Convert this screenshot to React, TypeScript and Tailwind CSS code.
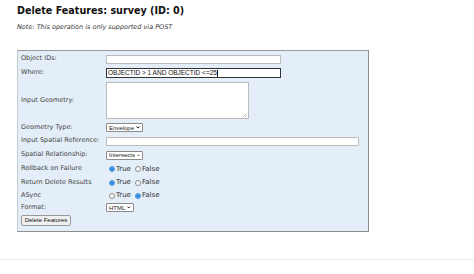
import React from 'react';

const vfont = { fontFamily: '"DejaVu Sans", Verdana, sans-serif' };
const afont = { fontFamily: '"Liberation Sans", Arial, sans-serif' };

function Chevron() {
  return (
    <svg width="6" height="5" viewBox="0 0 6 5" className="ml-[2px]">
      <path d="M0.8 1 L3 3.4 L5.2 1" fill="none" stroke="#111" strokeWidth="1.4" />
    </svg>
  );
}

function Select({ value, width }: { value: string; width: string }) {
  return (
    <div
      className={`flex h-[9px] items-center justify-between rounded-[1px] border border-[#8a8a8a] bg-white px-[2px] text-[6px] leading-none text-[#222] ${width}`}
      style={afont}
    >
      <span>{value}</span>
      <Chevron />
    </div>
  );
}

function Radio({ checked, label }: { checked: boolean; label: string }) {
  return (
    <span className="flex items-center gap-[1px] text-[7px] text-[#333]">
      <span
        className={`flex h-[6px] w-[6px] items-center justify-center rounded-full border ${checked ? 'border-[#3b8ee0] bg-white' : 'border-[#8a8a8a] bg-white'}`}
      >
        {checked && <span className="h-[4px] w-[4px] rounded-full bg-[#2f86df]" />}
      </span>
      <span>{label}</span>
    </span>
  );
}

function Row({ label, h, children }: { label: string; h: string; children: React.ReactNode }) {
  return (
    <div className={`flex items-center ${h}`}>
      <div className="w-[85px] shrink-0 text-[6.5px] text-[#444]">{label}</div>
      <div className="flex items-center">{children}</div>
    </div>
  );
}

export default function App() {
  return (
    <div className="relative h-[274px] w-[474px] overflow-hidden bg-white" style={vfont}>
      <div className="px-[17px] pt-[5px]">
        <h2 className="text-[9.6px] font-bold leading-[12px] text-[#111]">Delete Features: survey (ID: 0)</h2>
        <p className="mt-[6px] text-[6.5px] italic leading-[8px] text-[#333]">Note: This operation is only supported via POST</p>

        <div className="mt-[19px] h-[182px] w-[352px] border border-t-[#9a9a9a] border-r-[#8c8c8c] border-b-[#8c8c8c] border-l-[#c4ccd4] bg-[#e3eef8] pl-[3px] pt-[1px]">
          <Row label="Object IDs:" h="h-[14px]">
            <div className="h-[9px] w-[175px] border border-[#bbb] bg-white" />
          </Row>
          <Row label="Where:" h="h-[14px]">
            <div
              className="flex h-[10px] w-[175px] items-center border border-[#333] bg-white px-[1px] text-[6.5px] leading-none text-[#111]"
              style={afont}
            >
              OBJECTID &gt; 1 AND OBJECTID &lt;=25
              <span className="ml-[0.5px] h-[7px] w-[1px] bg-[#111]" />
            </div>
          </Row>
          <Row label="Input Geometry:" h="h-[41px]">
            <div className="relative h-[37px] w-[143px] border border-[#bbb] bg-white">
              <svg width="4" height="4" viewBox="0 0 4 4" className="absolute right-[1px] bottom-[1px]">
                <path d="M0 4 L4 0 M2 4 L4 2" stroke="#aaa" strokeWidth="0.6" />
              </svg>
            </div>
          </Row>
          <Row label="Geometry Type:" h="h-[13px]">
            <Select value="Envelope" width="w-[37px]" />
          </Row>
          <Row label="Input Spatial Reference:" h="h-[14px]">
            <div className="h-[9px] w-[253px] rounded-[1px] border border-[#bbb] bg-white" />
          </Row>
          <Row label="Spatial Relationship:" h="h-[14px]">
            <Select value="Intersects" width="w-[37px]" />
          </Row>
          <Row label="Rollback on Failure" h="h-[14px]">
            <div className="flex gap-[4px] pl-[3px]">
              <Radio checked label="True" />
              <Radio checked={false} label="False" />
            </div>
          </Row>
          <Row label="Return Delete Results" h="h-[13px]">
            <div className="flex gap-[4px] pl-[3px]">
              <Radio checked label="True" />
              <Radio checked={false} label="False" />
            </div>
          </Row>
          <Row label="ASync" h="h-[13px]">
            <div className="flex gap-[4px] pl-[3px]">
              <Radio checked={false} label="True" />
              <Radio checked label="False" />
            </div>
          </Row>
          <Row label="Format:" h="h-[11px]">
            <Select value="HTML" width="w-[28px]" />
          </Row>
          <div className="flex h-[14px] items-center">
            <button
              className="flex h-[11px] w-[50px] items-center justify-center rounded-[2px] border border-[#999] bg-[#f0f0f0] text-[6px] leading-none text-[#111]"
              style={afont}
            >
              Delete Features
            </button>
          </div>
        </div>
      </div>
      <div className="absolute left-0 right-0 top-[259px] h-[1px] bg-[#ececec]" />
    </div>
  );
}
